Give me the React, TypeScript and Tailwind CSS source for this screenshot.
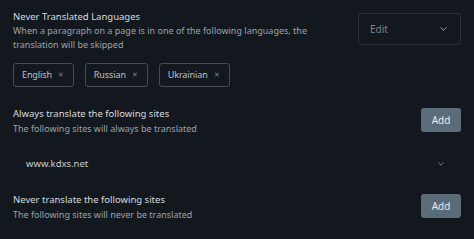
import React from 'react';

const ChevronDown = ({ className }: { className?: string }) => (
  <svg viewBox="0 0 10 6" className={className} fill="none" stroke="currentColor" strokeWidth="1.4" strokeLinecap="round" strokeLinejoin="round">
    <path d="M1 1l4 4 4-4" />
  </svg>
);

const Tag = ({ label }: { label: string }) => (
  <div className="flex items-center gap-[6px] h-6 pl-[8px] pr-[9px] border border-[#474c53] rounded-[3px] text-[9px] tracking-[-0.1px] text-[#bcc1c7]">
    <span>{label}</span>
    <span className="text-[7px] text-[#7d838b]">✕</span>
  </div>
);

const AddButton = ({ className = '' }: { className?: string }) => (
  <button className={`h-6 w-10 rounded-[3px] bg-[#5b6b78] text-[10px] text-[#e8ecef] ${className}`}>Add</button>
);

const SiteSection = ({ title, desc }: { title: string; desc: string }) => (
  <section className="flex justify-between items-start">
    <div>
      <h3 className="text-[9.5px] leading-[14px] text-[#d8dbdf]">{title}</h3>
      <p className="mt-[1px] text-[9px] leading-[14px] text-[#9ca2aa]">{desc}</p>
    </div>
    <AddButton className="mt-[1px]" />
  </section>
);

export default function App() {
  const tags = ['English', 'Russian', 'Ukrainian'];

  return (
    <div className="w-[474px] h-[239px] bg-[#13181e] pl-[13px] pr-[13px] pt-[10px] overflow-hidden" style={{ fontFamily: '"Noto Sans", "Open Sans", sans-serif' }}>
      {/* Never translated languages */}
      <section className="flex justify-between">
        <div>
          <h3 className="text-[9.5px] leading-[14px] text-[#d8dbdf]">Never Translated Languages</h3>
          <p className="text-[9px] leading-[14px] text-[#9ca2aa] w-[305px]">
            When a paragraph on a page is in one of the following languages, the translation will be skipped
          </p>
          <div className="flex gap-[11px] mt-[11px]">
            {tags.map((t) => <Tag key={t} label={t} />)}
          </div>
        </div>
        <div className="mt-[3px] w-[103px] h-8 flex items-center justify-between pl-[11px] pr-[13px] border border-[#2a3037] rounded-[3px] text-[10px] text-[#7b828a]">
          <span>Edit</span>
          <ChevronDown className="w-[7px] h-[4px] text-[#a3a9b0]" />
        </div>
      </section>

      <div className="mt-[20px]">
        <SiteSection title="Always translate the following sites" desc="The following sites will always be translated" />
      </div>

      <div className="flex justify-between items-center h-[22px] mt-[17px] pl-[13px] pr-[17px]">
        <span className="text-[9.5px] text-[#c9cdd2]">www.kdxs.net</span>
        <ChevronDown className="w-[6px] h-[4px] text-[#8e949b]" />
      </div>

      <div className="mt-[18px]">
        <SiteSection title="Never translate the following sites" desc="The following sites will never be translated" />
      </div>
    </div>
  );
}
